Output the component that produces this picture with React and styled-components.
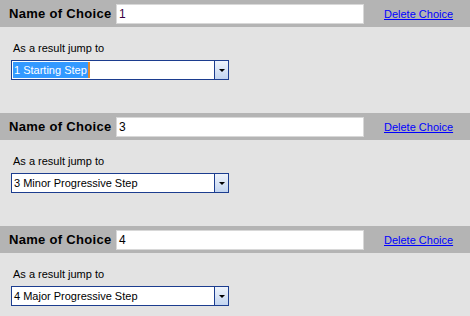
import React from "react";
import styled, { createGlobalStyle } from "styled-components";

const GlobalStyle = createGlobalStyle`
    html, body {
        margin: 0;
        padding: 0;
        background: #e3e3e3;
    }
    body {
        font-family: "Liberation Sans", Arial, sans-serif;
        font-size: 11px;
        color: #000;
    }
`;

const Page = styled.div`
    width: 470px;
    height: 316px;
    overflow: hidden;
    background: #e3e3e3;
`;

const ChoiceBlock = styled.div`
    height: 113px;
    display: flex;
    flex-direction: column;
`;

const Header = styled.div`
    height: 27px;
    background: #b4b4b4;
    display: flex;
    align-items: center;
    padding-left: 9px;
    box-sizing: border-box;
`;

const HeaderLabel = styled.span`
    font-weight: bold;
    font-size: 13px;
    letter-spacing: 0.3px;
    width: 107px;
    white-space: nowrap;
`;

const NameInput = styled.div`
    width: 248px;
    height: 20px;
    box-sizing: border-box;
    background: #fff;
    border: 1px solid #d8d8d8;
    padding-left: 2px;
    display: flex;
    align-items: center;
    font-size: 12px;
    color: ${(p) => (p.$focused ? "#3a0040" : "#000")};
`;

const DeleteLink = styled.a`
    margin-left: 20px;
    font-size: 11px;
    color: #0000ff;
    text-decoration: underline;
    cursor: pointer;
`;

const Body = styled.div`
    padding: 14px 0 0 11px;
    display: flex;
    flex-direction: column;
`;

const JumpLabel = styled.div`
    padding-left: 2px;
    font-size: 11px;
    line-height: 14px;
    height: 14px;
`;

const Select = styled.div`
    margin-top: 5px;
    width: 218px;
    height: 20px;
    box-sizing: border-box;
    border: 1px solid #1c3d8f;
    background: #fff;
    display: flex;
    align-items: stretch;
`;

const SelectValue = styled.div`
    flex: 1;
    display: flex;
    align-items: center;
    padding-left: 1px;
    font-size: 11px;
`;

const Highlight = styled.span`
    background: ${(p) => (p.$selected ? "#3399ff" : "transparent")};
    color: ${(p) => (p.$selected ? "#fff" : "#000")};
    padding: 1px;
    line-height: 14px;
    border-right: ${(p) => (p.$selected ? "2px solid #e08a30" : "none")};
`;

const ArrowButton = styled.div`
    width: 13px;
    border-left: 1px solid #1c3d8f;
    background: linear-gradient(#eef3fb, #c3d5f0);
    display: flex;
    align-items: center;
    justify-content: center;
`;

const Arrow = styled.div`
    width: 0;
    height: 0;
    border-left: 3px solid transparent;
    border-right: 3px solid transparent;
    border-top: 3px solid #000;
`;

const choices = [
    { name: "1", target: "1 Starting Step", selected: true },
    { name: "3", target: "3 Minor Progressive Step" },
    { name: "4", target: "4 Major Progressive Step" },
];

function Choice({ name, target, selected }) {
    return (
        <ChoiceBlock>
            <Header>
                <HeaderLabel>Name of Choice</HeaderLabel>
                <NameInput $focused={selected}>{name}</NameInput>
                <DeleteLink>Delete Choice</DeleteLink>
            </Header>
            <Body>
                <JumpLabel>As a result jump to</JumpLabel>
                <Select>
                    <SelectValue>
                        <Highlight $selected={selected}>{target}</Highlight>
                    </SelectValue>
                    <ArrowButton>
                        <Arrow />
                    </ArrowButton>
                </Select>
            </Body>
        </ChoiceBlock>
    );
}

export default function App() {
    return (
        <Page>
            <GlobalStyle />
            {choices.map((c) => (
                <Choice key={c.name} {...c} />
            ))}
        </Page>
    );
}
